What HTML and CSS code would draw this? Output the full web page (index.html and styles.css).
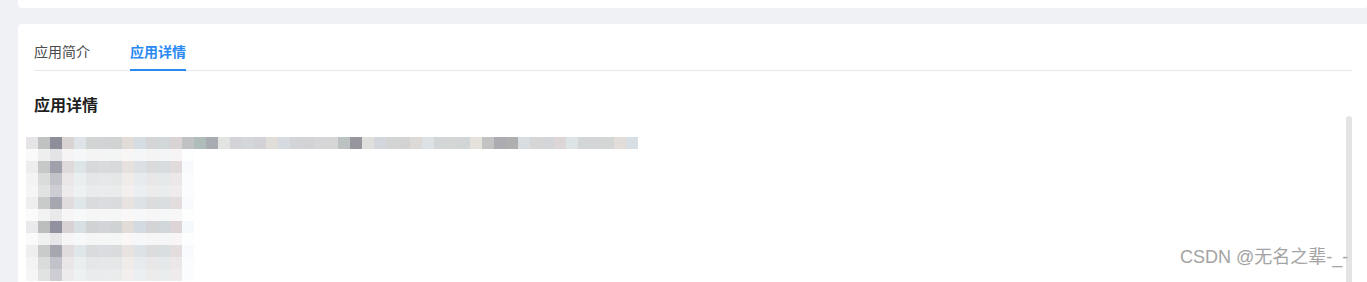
FILE: index.html
```html
<!DOCTYPE html>
<html lang="zh-CN">
<head>
<meta charset="utf-8">
<title>应用详情</title>
<link rel="stylesheet" href="styles.css">
</head>
<body>
<div class="page">
  <div class="top-card"></div>
  <div class="card">
    <div class="tabs">
      <div class="tab">应用简介</div>
      <div class="tab active">应用详情</div>
    </div>
    <h2 class="title">应用详情</h2>
    <div class="mosaic">
      <div class="m-top"></div>
      <div class="m-row r1"></div>
      <div class="m-row r2"></div>
      <div class="m-row r3"></div>
      <div class="m-row r4"></div>
      <div class="m-row r5"></div>
      <div class="m-row r6"></div>
      <div class="m-row r7"></div>
      <div class="m-row r8"></div>
      <div class="m-row r9"></div>
      <div class="m-row r10"></div>
      <div class="m-row r11"></div>
    </div>
  </div>
  <div class="scrollbar"></div>
  <div class="watermark">CSDN @无名之辈-_-</div>
</div>
</body>
</html>
```
FILE: styles.css
```css
html, body {
  margin: 0;
  padding: 0;
  height: 282px;
  overflow: hidden;
  background: #f0f1f5;
}
.page {
  position: relative;
  width: 1368px;
  height: 282px;
  padding-left: 18px;
  box-sizing: border-box;
  font-family: "Noto Sans CJK SC", "Noto Sans", sans-serif;
}
.top-card {
  height: 8px;
  background: #fff;
  border-radius: 0 0 4px 4px;
}
.card {
  margin-top: 16px;
  background: #fff;
  border-radius: 4px 0 0 0;
  padding: 8px 16px 0 16px;
  height: 300px;
}
.tabs {
  display: flex;
  gap: 40px;
  border-bottom: 1px solid #e6e8ee;
  height: 38px;
}
.tab {
  position: relative;
  font-size: 14px;
  line-height: 38px;
  color: #4a4a4a;
}
.tab.active {
  color: #2a8af2;
  font-weight: 700;
}
.tab.active::after {
  content: "";
  position: absolute;
  left: 0;
  right: 0;
  bottom: -1px;
  height: 2px;
  background: #2a8af2;
}
.title {
  margin: 21px 0 0 0;
  font-size: 16px;
  line-height: 24px;
  font-weight: 700;
  color: #1f1f1f;
}
.mosaic {
  margin: 21px 0 0 -8px;
  display: flex;
  flex-direction: column;
}
.m-top {
  width: 612px;
  height: 12px;
  background: linear-gradient(to right,
    #e6e4e6 0 12px, #c0c2c2 12px 24px, #8e8e9a 24px 36px, #dad3d4 36px 48px,
    #dde3e6 48px 60px, #d3d5d5 60px 72px, #d2d3d7 72px 84px, #d0d3d2 84px 96px,
    #e1dcd8 96px 108px, #d6dde2 108px 120px, #d5d5d7 120px 132px, #d2d7d9 132px 144px,
    #dad3d4 144px 156px, #c0c2c4 156px 168px, #b0bcb9 168px 180px, #a9abb3 180px 192px,
    #e1e4e0 192px 204px, #d3d3d8 204px 216px, #d3d7da 216px 228px, #d3d2d7 228px 240px,
    #e1ddd8 240px 252px, #d6dbe1 252px 264px, #d3d4d7 264px 276px, #d3d3d6 276px 288px,
    #d6d6d8 288px 300px, #d6d6d6 300px 312px, #bcc1c1 312px 324px, #97969e 324px 336px,
    #dfe0dd 336px 348px, #d4d6de 348px 360px, #d3d5d5 360px 372px, #d3d3d3 372px 384px,
    #dcd9d7 384px 396px, #dce1e5 396px 408px, #d2d6d6 408px 420px, #d4d5d5 420px 432px,
    #d1d5d6 432px 444px, #e5e2dc 444px 456px, #c3c3c3 456px 468px, #acacb2 468px 480px,
    #b0afaf 480px 492px, #d7dde0 492px 504px, #d6d6d6 504px 516px, #d3d5d8 516px 528px,
    #dcd6d6 528px 540px, #dde4e6 540px 552px, #d3d6d6 552px 564px, #d3d5d6 564px 576px,
    #d3d6d4 576px 588px, #e3ddda 588px 600px, #d8dfe4 600px 612px);
}
.m-row {
  width: 168px;
  height: 12px;
  background: linear-gradient(to right,
    #eaeaec 0 12px, #bcbebe 12px 24px, #90909e 24px 36px, #d9d2d4 36px 48px,
    #d8e0e3 48px 60px, #d0d2d4 60px 72px, #d2d4d8 72px 84px, #d0d3d4 84px 96px,
    #e2dcd9 96px 108px, #d4dbe0 108px 120px, #d4d4d6 120px 132px, #d0d6d9 132px 144px,
    #dcd4d6 144px 156px, #f6f9fc 156px 168px);
}
.r1 { opacity: 0.25; }
.r2 { opacity: 0.85; }
.r3 { opacity: 0.55; }
.r4 { opacity: 0.45; }
.r5 { opacity: 0.8; }
.r6 { opacity: 0.2; }
.r7 { opacity: 1; }
.r8 { opacity: 0.22; }
.r9 { opacity: 0.8; }
.r10 { opacity: 0.55; }
.r11 { opacity: 0.45; }
.scrollbar {
  position: absolute;
  left: 1346px;
  top: 116px;
  width: 6px;
  height: 180px;
  background: #e4e4e4;
  border-radius: 3px 3px 0 0;
}
.watermark {
  position: absolute;
  left: 1180px;
  top: 246px;
  font-family: "Liberation Sans", "Noto Sans CJK SC", sans-serif;
  font-size: 18px;
  line-height: 22px;
  color: #a3a3a3;
  white-space: nowrap;
  text-shadow: 0 0 1px #fff;
}
```
